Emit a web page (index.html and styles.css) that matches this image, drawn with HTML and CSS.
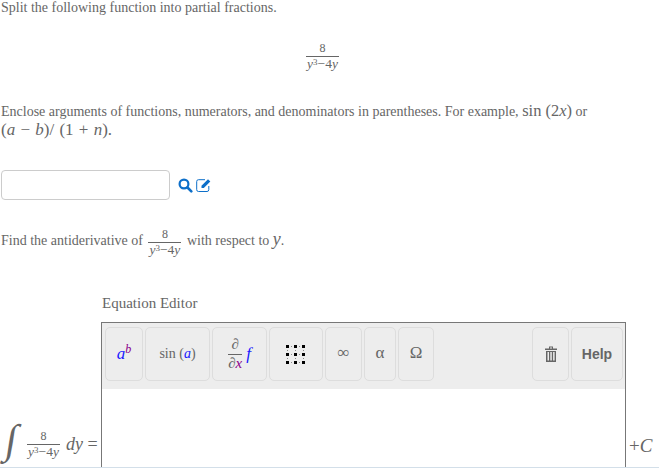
FILE: index.html
```html
<!DOCTYPE html>
<html lang="en">
<head>
<meta charset="utf-8">
<title>Partial fractions</title>
<link rel="stylesheet" href="styles.css">
</head>
<body>
<main class="page">
  <p class="line first">Split the following function into partial fractions.</p>
  <div class="center-math">
    <span class="frac small"><span class="num">8</span><span class="den"><i>y</i><sup>3</sup>−4<i>y</i></span></span>
  </div>
  <p class="line enclose">Enclose arguments of functions, numerators, and denominators in parentheses. For example, <span class="m">sin (2<i>x</i>)</span> or <br><span class="m wide">(<i>a</i> − <i>b</i>)/ (1 + <i>n</i>).</span></p>
  <div class="answer">
    <input class="answer-box" type="text" aria-label="Answer">
    <svg class="icon" width="15" height="15" viewBox="0 0 15 15" aria-hidden="true"><circle cx="6" cy="6" r="4.4" fill="none" stroke="#0d6fc9" stroke-width="2.2"/><path d="M9.500 9.500l3.800 3.800" stroke="#0d6fc9" stroke-width="2.6" stroke-linecap="round"/></svg>
    <svg class="icon edit" width="16" height="14" viewBox="0 0 16 14" aria-hidden="true"><path d="M9 1.700H2.500A1.800 1.800 0 0 0 .7 3.500v8.200a1.800 1.800 0 0 0 1.800 1.800h8.500a1.800 1.800 0 0 0 1.800-1.800V8" fill="none" stroke="#0d6fc9" stroke-width="1"/><path d="M5.500 7.700L12 1.200l2.300 2.300L7.800 10H5.500z" fill="#0d6fc9"/></svg>
  </div>
  <p class="line find">Find the antiderivative of <span class="frac inline"><span class="num">8</span><span class="den"><i>y</i><sup>3</sup>−4<i>y</i></span></span> with respect to <i class="big">y</i>.</p>
  <div class="editor-title">Equation Editor</div>
  <div class="equation">
    <div class="lhs">
      <span class="integral">∫</span>
      <span class="frac lhs-frac"><span class="num">8</span><span class="den"><i>y</i><sup>3</sup>−4<i>y</i></span></span>
      <span class="dy"><i>dy</i> =</span>
    </div>
    <div class="editor">
      <div class="toolbar">
        <button class="btn b1" type="button"><span class="ab"><i class="blue">a</i><sup class="purple"><i>b</i></sup></span></button>
        <button class="btn b2" type="button">sin (<i class="blue">a</i>)</button>
        <button class="btn b3" type="button"><span class="frac partial"><span class="num"><i>∂</i></span><span class="den"><i>∂</i><i class="purple">x</i></span></span><i class="blue fn">f</i></button>
        <button class="btn b4" type="button" aria-label="Matrix">
          <svg width="20" height="20" viewBox="0 0 20 20" aria-hidden="true"><path d="M0 1h3v3H0zM8 1h3v3H8zM16 1h3v3h-3zM0 9h3v3H0zM8 9h3v3H8zM16 9h3v3h-3zM0 17h3v3H0zM8 17h3v3H8zM16 17h3v3h-3z" fill="#000"/><path d="M5 2h1v1H5zM13 2h1v1h-1zM5 10h1v1H5zM13 10h1v1h-1zM5 18h1v1H5zM13 18h1v1h-1zM1 6h1v1H1zM9 6h1v1H9zM17 6h1v1h-1zM1 14h1v1H1zM9 14h1v1H9zM17 14h1v1h-1z" fill="#888"/></svg>
        </button>
        <button class="btn b5 sym" type="button"><span class="lift">∞</span></button>
        <button class="btn b6 sym" type="button"><span class="lift">α</span></button>
        <button class="btn b7 sym" type="button"><span class="lift">Ω</span></button>
        <button class="btn b8" type="button" aria-label="Delete">
          <svg width="14" height="16" viewBox="0 0 14 16" aria-hidden="true"><path d="M1 2.500h12V4H1zM5 .5h4v2H8V1.500H6v1H5zM2 5h10v11H2zM3.500 6v8.500h1.500V6zM6.300 6v8.500h1.500V6zM9.100 6v8.500h1.500V6z" fill="#666" fill-rule="evenodd"/></svg>
        </button>
        <button class="btn b9" type="button">Help</button>
      </div>
      <div class="canvas"></div>
    </div>
    <div class="rhs"><span class="plus">+</span><i>C</i></div>
  </div>
</main>
<div class="rule"></div>
</body>
</html>
```
FILE: styles.css
```css
html, body {
  margin: 0;
  padding: 0;
  background: #fff;
}
body {
  height: 468px;
  overflow: hidden;
  font-family: "Liberation Serif", "Times New Roman", serif;
  font-size: 14px;
  color: #666;
}
.page {
  height: 467px;
  overflow: hidden;
  display: flex;
  flex-direction: column;
}
.line {
  margin: 0;
  padding-left: 1px;
}
.first {
  line-height: 15px;
}
.center-math {
  margin-top: 26px;
  height: 30px;
  padding-left: 306px;
}
.frac {
  display: inline-flex;
  flex-direction: column;
  align-items: stretch;
  text-align: center;
  vertical-align: middle;
  min-width: 33px;
  font-size: 12px;
  line-height: 14px;
}
.frac .num {
  padding-bottom: 1px;
  border-bottom: 1px solid #666;
}
.frac .den {
  white-space: nowrap;
  font-size: 13.500px;
}
.frac sup {
  font-size: 9px;
  line-height: 0;
  vertical-align: 3px;
}
.enclose {
  margin-top: 31px;
  line-height: 18px;
}
.m {
  font-size: 16.500px;
}
.wide {
  font-size: 17px;
  word-spacing: 1px;
}
.answer {
  margin-top: 30px;
  display: flex;
  align-items: center;
  padding-left: 1px;
  height: 30px;
}
.answer-box {
  box-sizing: border-box;
  width: 169px;
  height: 30px;
  margin: 0 8px 0 0;
  border: 1px solid #ccc;
  border-radius: 4px;
  background: #fff;
}
.edit {
  margin-left: 3px;
}
.find {
  margin-top: 18px;
  line-height: 42px;
  height: 42px;
}
.big {
  font-size: 18px;
}
.inline {
  margin: 0 2px;
}
.editor-title {
  margin-top: 33px;
  padding-left: 102px;
  line-height: 20px;
  font-size: 15px;
}
.equation {
  margin-top: 9px;
  flex: 1;
  display: grid;
  grid-template-columns: 101px 525px 1fr;
  align-items: end;
}
.lhs {
  display: flex;
  align-items: center;
  height: 44px;
  margin-bottom: 1px;
  padding-left: 3px;
}
.integral {
  width: 24px;
  margin-bottom: 10px;
  font-size: 41px;
  line-height: 44px;
  font-style: italic;
  text-indent: 3px;
  transform: skewX(-9deg);
}
.dy {
  margin-left: 6px;
  font-size: 18px;
  white-space: nowrap;
}
.editor {
  box-sizing: border-box;
  height: 100%;
  border: 1px solid #777;
  border-bottom: 0;
  display: flex;
  flex-direction: column;
}
.toolbar {
  height: 66px;
  box-sizing: border-box;
  padding: 4px 2px 0 3px;
  background: #ededed;
  display: flex;
  gap: 2px;
}
.canvas {
  flex: 1;
  background: #fff;
}
.btn {
  box-sizing: border-box;
  height: 54px;
  padding: 0;
  border: 1px solid #ddd;
  border-radius: 5px;
  background: #ededed;
  font-family: "Liberation Serif", "Times New Roman", serif;
  font-size: 14px;
  color: #666;
  display: flex;
  align-items: center;
  justify-content: center;
}
.b1 { width: 38px; }
.b2 { width: 65px; }
.b3 { width: 55px; }
.b4 { width: 54px; }
.b5 { width: 37px; }
.b6 { width: 32px; }
.b7 { width: 36px; }
.b8 { width: 37px; margin-left: auto; }
.b9 {
  width: 52px;
  font-family: "Liberation Sans", Arial, sans-serif;
  font-weight: 700;
  font-size: 14px;
}
.blue { color: #1a1aff; }
.purple { color: #8b008b; }
.ab { font-size: 17px; }
.ab sup {
  font-size: 12px;
  line-height: 0;
  vertical-align: 6px;
}
.frac.partial {
  min-width: 0;
  font-size: 15px;
  line-height: 17px;
  width: 14px;
}
.frac.partial .den { font-size: 15px; }
.fn {
  font-size: 17px;
  margin-left: 4px;
}
.sym { font-size: 17px; }
.lift { margin-top: -3px; }
.rhs {
  padding-left: 3px;
  margin-bottom: 12px;
  font-size: 19px;
  line-height: 18px;
  white-space: nowrap;
}
.rule {
  height: 1px;
  background: #d3dfe9;
}
```
